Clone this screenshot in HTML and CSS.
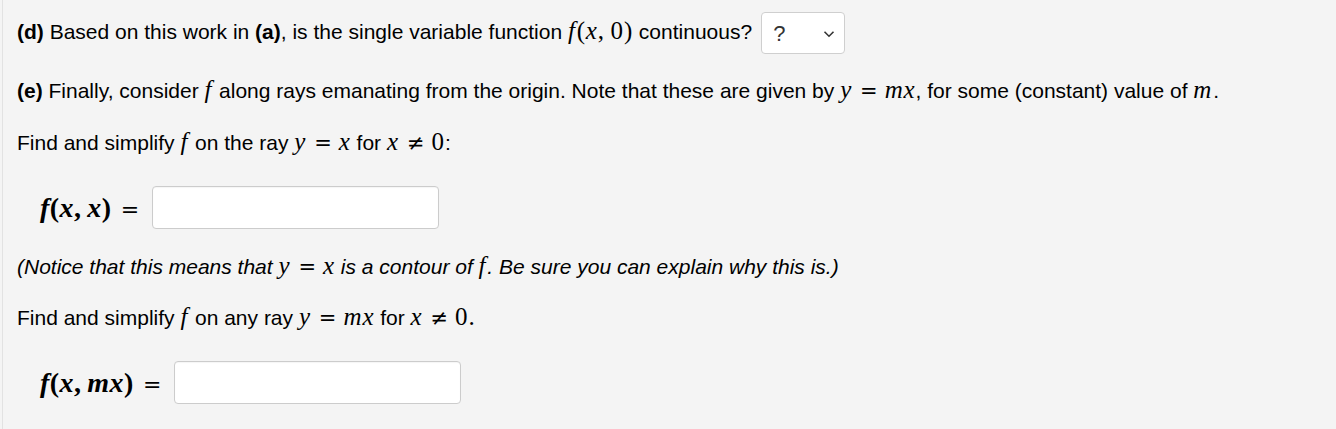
FILE: index.html
```html
<!DOCTYPE html>
<html>
<head>
<meta charset="utf-8">
<link rel="stylesheet" href="styles.css">
</head>
<body>
<div class="page">
  <div class="row row-d">
    <span class="txt"><b>(d)</b> Based on this work in <b>(a)</b>, is the single variable function <span class="m"><i>f</i>(<i>x</i>,&thinsp;0)</span> continuous?</span>
    <div class="select"><span class="q">?</span><svg class="chev" width="12" height="8" viewBox="0 0 12 8"><path d="M1.5 1.8 L6 6.2 L10.5 1.8" fill="none" stroke="#333" stroke-width="1.6"/></svg></div>
  </div>
  <div class="row row-e">
    <span><b>(e)</b> Finally, consider <span class="m"><i>f</i></span> along rays emanating from the origin. Note that these are given by <span class="m"><i>y</i> <span class="op">=</span> <i>mx</i></span>, for some (constant) value of <span class="m"><i>m</i></span>.</span>
  </div>
  <div class="row row-f1">
    <span>Find and simplify <span class="m"><i>f</i></span> on the ray <span class="m"><i>y</i> <span class="op">=</span> <i>x</i></span> for <span class="m"><i>x</i> <span class="op">&ne;</span> 0</span>:</span>
  </div>
  <div class="row row-in1">
    <span class="dm"><i>f</i>(<i>x</i>,&thinsp;<i>x</i>) <span class="op">=</span></span>
    <div class="inp"></div>
  </div>
  <div class="row row-n">
    <span class="it">(Notice that this means that <span class="m"><i>y</i> <span class="op">=</span> <i>x</i></span> is a contour of <span class="m"><i>f</i></span>. Be sure you can explain why this is.)</span>
  </div>
  <div class="row row-f2">
    <span>Find and simplify <span class="m"><i>f</i></span> on any ray <span class="m"><i>y</i> <span class="op">=</span> <i>mx</i></span> for <span class="m"><i>x</i> <span class="op">&ne;</span> 0.</span></span>
  </div>
  <div class="row row-in2">
    <span class="dm"><i>f</i>(<i>x</i>,&thinsp;<i>mx</i>) <span class="op">=</span></span>
    <div class="inp"></div>
  </div>
</div>
</body>
</html>
```
FILE: styles.css
```css
html, body {
  margin: 0;
  padding: 0;
  background: #f4f4f4;
}
.page {
  margin-left: 2px;
  border-left: 1px solid #e2e2e2;
  height: 429px;
  box-sizing: border-box;
  padding-left: 14px;
  padding-top: 12px;
  font-family: "Liberation Sans", Arial, sans-serif;
  font-size: 21px;
  color: #000;
  background: #f4f4f4;
}
.row {
  display: flex;
  align-items: center;
  white-space: nowrap;
}
.txt { padding-bottom: 4px; }
.row-d { height: 42px; }
.row-e { height: 30px; margin-top: 21px; }
.row-f1 { height: 30px; margin-top: 22px; }
.row-in1 { height: 43px; margin-top: 29px; padding-left: 23px; }
.row-n { height: 30px; margin-top: 22px; }
.row-f2 { height: 30px; margin-top: 21px; }
.row-in2 { height: 43px; margin-top: 29px; padding-left: 23px; }
.m {
  font-family: "Liberation Serif", "Times New Roman", serif;
  font-size: 25px;
  font-style: normal;
  letter-spacing: 0.8px;
}
.m i { font-style: italic; }
.m i:first-child { padding-right: 1px; }
.op {
  font-family: "DejaVu Sans", sans-serif;
  font-size: 21px;
  padding: 0;
  letter-spacing: 0;
}
.it { font-style: italic; }
.dm {
  font-family: "Liberation Serif", "Times New Roman", serif;
  font-size: 28px;
  font-weight: bold;
  letter-spacing: 0.4px;
  margin-right: 11px;
}
.dm i { font-style: italic; }
.dm .op { font-weight: normal; font-size: 22px; padding: 0 2px; }
.select {
  margin-left: 9px;
  width: 84px;
  height: 42px;
  box-sizing: border-box;
  border: 1px solid #cfcfcf;
  border-radius: 4px;
  background: #fff;
  display: flex;
  align-items: center;
  justify-content: space-between;
  padding: 0 9px 0 11px;
}
.q {
  font-size: 22px;
  color: #333;
  margin-top: 2px;
}
.chev { margin-top: 2px; }
.inp {
  width: 287px;
  height: 43px;
  box-sizing: border-box;
  border: 1px solid #cccccc;
  border-radius: 4px;
  background: #fff;
  box-shadow: inset 0 1px 1px rgba(0,0,0,0.04);
}
```
